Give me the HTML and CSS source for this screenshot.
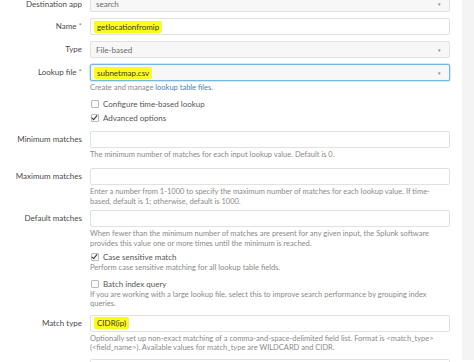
FILE: index.html
```html
<!DOCTYPE html>
<html>
<head>
<meta charset="utf-8">
<link rel="stylesheet" href="styles.css">
</head>
<body>
<div class="page">
  <div class="form">
    <div class="row r-dest">
      <div class="label">Destination app</div>
      <div class="ctl"><div class="input select"><span class="val">search</span><span class="caret">▾</span></div></div>
    </div>
    <div class="row r-name">
      <div class="label">Name <span class="req">*</span></div>
      <div class="ctl"><div class="input"><span class="hl">getlocationfromip</span></div></div>
    </div>
    <div class="row r-type">
      <div class="label">Type</div>
      <div class="ctl"><div class="input select"><span class="val">File-based</span><span class="caret">▾</span></div></div>
    </div>
    <div class="row r-lookup">
      <div class="label">Lookup file <span class="req">*</span></div>
      <div class="ctl">
        <div class="input select focus"><span class="hl">subnetmap.csv</span><span class="caret">▾</span></div>
        <div class="help">Create and manage <span class="link">lookup table files</span>.</div>
        <div class="check c-first"><span class="box"></span>Configure time-based lookup</div>
        <div class="check"><span class="box checked"></span>Advanced options</div>
      </div>
    </div>
    <div class="row r-min">
      <div class="label">Minimum matches</div>
      <div class="ctl">
        <div class="input"></div>
        <div class="help">The minimum number of matches for each input lookup value. Default is 0.</div>
      </div>
    </div>
    <div class="row r-max">
      <div class="label">Maximum matches</div>
      <div class="ctl">
        <div class="input"></div>
        <div class="help">Enter a number from 1-1000 to specify the maximum number of matches for each lookup value. If time-based, default is 1; otherwise, default is 1000.</div>
      </div>
    </div>
    <div class="row r-def">
      <div class="label">Default matches</div>
      <div class="ctl">
        <div class="input"></div>
        <div class="help">When fewer than the minimum number of matches are present for any given input, the Splunk software provides this value one or more times until the minimum is reached.</div>
        <div class="check c-case"><span class="box checked"></span>Case sensitive match</div>
        <div class="help h-after">Perform case sensitive matching for all lookup table fields.</div>
        <div class="check c-batch"><span class="box"></span>Batch index query</div>
        <div class="help h-after">If you are working with a large lookup file, select this to improve search performance by grouping index queries.</div>
      </div>
    </div>
    <div class="row r-match">
      <div class="label">Match type</div>
      <div class="ctl">
        <div class="input"><span class="hl">CIDR(ip)</span></div>
        <div class="help">Optionally set up non-exact matching of a comma-and-space-delimited field list. Format is &lt;match_type&gt;(&lt;field_name&gt;). Available values for match_type are WILDCARD and CIDR.</div>
      </div>
    </div>
    <div class="row r-last">
      <div class="label"></div>
      <div class="ctl"><div class="input"></div></div>
    </div>
  </div>
  <div class="side"></div>
</div>
</body>
</html>
```

FILE: styles.css
```css
html, body {
  margin: 0;
  padding: 0;
  background: #ffffff;
  overflow: hidden;
}
body {
  font-family: "Lato", "Open Sans", sans-serif;
  color: #5c5c5c;
  width: 474px;
  height: 362px;
}
.page {
  display: flex;
  align-items: flex-start;
}
.form {
  width: 462px;
  margin-top: -5px;
}
.side {
  width: 12px;
  height: 360px;
  background: #f4f4f4;
}
.row {
  display: flex;
  margin-bottom: 6px;
}
.label {
  width: 82px;
  flex: none;
  text-align: right;
  font-size: 8px;
  line-height: 17px;
  color: #4a4a4a;
  padding-right: 8px;
}
.r-dest .label {
  line-height: 8px;
  padding-top: 5px;
  box-sizing: content-box;
}
.req {
  color: #888;
}
.ctl {
  width: 360px;
  flex: none;
}
.input {
  box-sizing: border-box;
  height: 17px;
  border: 1px solid #e1e1e1;
  border-radius: 2px;
  background: #fff;
  display: flex;
  align-items: center;
  padding: 0 5px;
  font-size: 8px;
  color: #6a6a6a;
}
.select {
  background: #f7f7f7;
  justify-content: space-between;
}
.focus {
  border-color: #72b7e6;
  box-shadow: 0 0 0 0.5px #a9d4f2;
}
.caret {
  font-size: 5px;
  color: #888;
  margin-right: 3px;
}
.hl {
  background: #fbfb1c;
  color: #3a3a20;
  padding: 1px 3px;
  margin-left: -2px;
  border-radius: 2px;
  line-height: 10px;
}
.help {
  font-size: 7.5px;
  line-height: 9.5px;
  color: #8a8a8a;
  margin-top: 2px;
}
.help.h-after {
  margin-top: 1px;
}
.link {
  color: #3f7fbf;
}
.check {
  display: flex;
  align-items: center;
  font-size: 8px;
  line-height: 10px;
  color: #555;
  height: 10px;
}
.c-first {
  margin-top: 6px;
  margin-bottom: 4px;
}
.c-case {
  margin-top: 4px;
}
.c-batch {
  margin-top: 6px;
}
.box {
  width: 6px;
  height: 6px;
  border: 1px solid #bbb;
  border-radius: 1px;
  background: #fafafa;
  margin: 0 4px 0 1px;
  position: relative;
}
.box.checked::after {
  content: "";
  position: absolute;
  left: 1px;
  top: -1px;
  width: 2px;
  height: 5px;
  border: solid #333;
  border-width: 0 1.5px 1.5px 0;
  transform: rotate(40deg);
}
.r-lookup {
  margin-bottom: 8px;
}
.r-min {
  margin-bottom: 9px;
}
.r-max {
  margin-bottom: 4px;
}
.r-def {
  margin-bottom: 6px;
}
.r-match {
  margin-bottom: 6px;
}
```
